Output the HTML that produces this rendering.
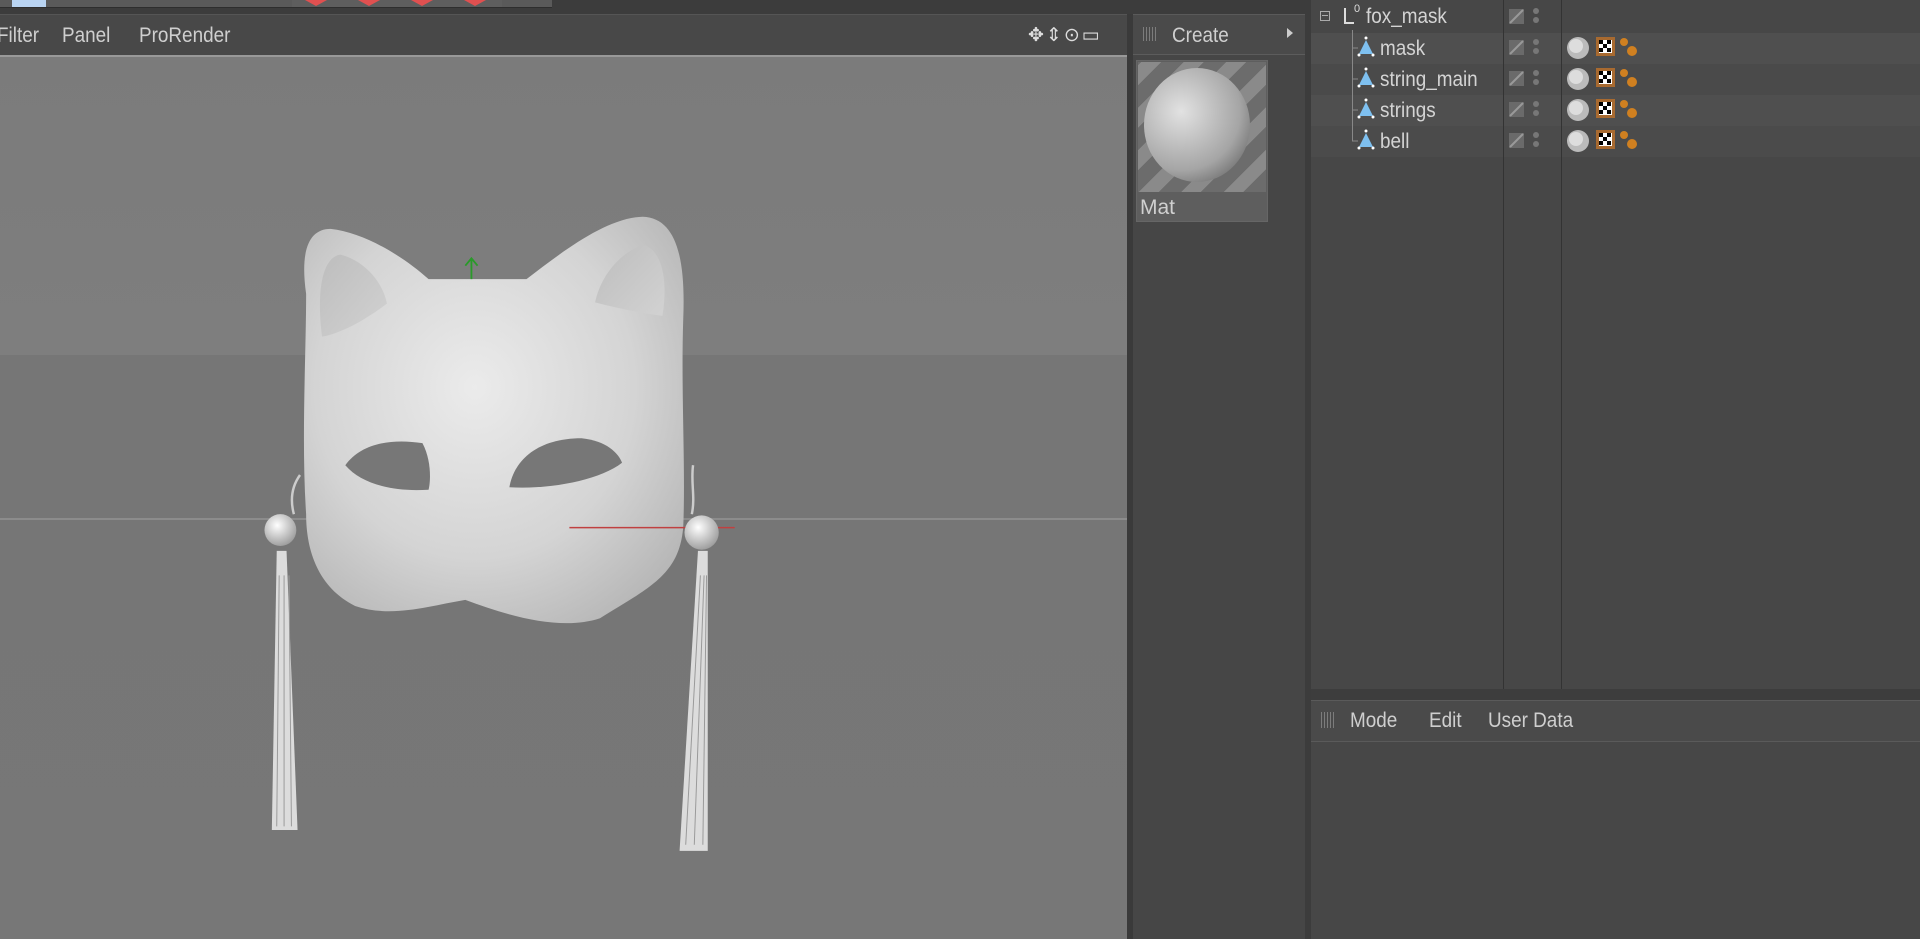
<!DOCTYPE html>
<html><head><meta charset="utf-8"><style>
*{margin:0;padding:0;box-sizing:border-box}
body{width:1920px;height:939px;overflow:hidden;background:#444;font-family:"Liberation Sans",sans-serif;position:relative;color:#c8c8c8}
.abs{position:absolute}
.menu{font-size:21px;color:#cfcfcf;transform:scaleX(.9);transform-origin:left}
.row{position:absolute;left:1311px;width:609px;height:31px}
.name{position:absolute;left:1380px;font-size:21px;color:#d4d4d4;transform:scaleX(.9);transform-origin:left}
</style></head><body>
<div class="abs" style="left:0;top:0;width:1920px;height:14px;background:#3c3c3c"></div>
<div class="abs" style="left:0;top:0;width:552px;height:8px;background:#5a5a5a;border-bottom:1px solid #2e2e2e"></div>
<div class="abs" style="left:12px;top:0;width:34px;height:7px;background:#b9d4f2"></div>
<div class="abs" style="left:292px;top:0;width:210px;height:7px;background:#5e5e5e"></div>
<div class="abs" style="left:305px;top:0;width:22px;height:6px;background:#e05050;clip-path:polygon(0 0,100% 0,50% 100%)"></div>
<div class="abs" style="left:358px;top:0;width:22px;height:6px;background:#e05050;clip-path:polygon(0 0,100% 0,50% 100%)"></div>
<div class="abs" style="left:411px;top:0;width:22px;height:6px;background:#e05050;clip-path:polygon(0 0,100% 0,50% 100%)"></div>
<div class="abs" style="left:464px;top:0;width:22px;height:6px;background:#e05050;clip-path:polygon(0 0,100% 0,50% 100%)"></div>
<div class="abs" style="left:0;top:14px;width:1127px;height:41px;background:#484848;border-top:1px solid #555"></div>
<div class="abs menu" style="left:-3px;top:24px">Filter</div>
<div class="abs menu" style="left:62px;top:24px">Panel</div>
<div class="abs menu" style="left:139px;top:24px">ProRender</div>
<div class="abs" style="left:1028px;top:24px;font-size:19px;color:#ddd;letter-spacing:2px">✥⇕⊙▭</div>
<div class="abs" style="left:0;top:55px;width:1127px;height:884px;background:linear-gradient(#7b7b7b 0,#7e7e7e 298px,#767676 298px,#777 100%);border-top:2px solid #999"></div>
<div class="abs" style="left:0;top:518px;width:1127px;height:2px;background:#8c8c8c"></div>
<div class="abs" style="left:1127px;top:14px;width:6px;height:925px;background:#3a3a3a"></div>
<svg class="abs" style="left:0;top:0" width="1920" height="939" viewBox="0 0 1568 767" preserveAspectRatio="none">
<defs>
<radialGradient id="g" cx="0.45" cy="0.42" r="0.7"><stop offset="0" stop-color="#ebebeb"/><stop offset=".6" stop-color="#d4d4d4"/><stop offset="1" stop-color="#b4b4b4"/></radialGradient>
<radialGradient id="b" cx=".4" cy=".35" r=".7"><stop offset="0" stop-color="#fff"/><stop offset="1" stop-color="#999"/></radialGradient>
<linearGradient id="e" x1="0" y1="0" x2="1" y2="1"><stop offset="0" stop-color="#bdbdbd"/><stop offset="1" stop-color="#d2d2d2"/></linearGradient>
</defs>
<path d="M250 240C245 205 252 187 270 187C298 190 330 210 350 228L430 228C460 205 495 178 525 177C552 178 560 210 558 260C556 320 560 380 558 430C555 470 530 480 490 505C460 515 420 505 380 490C350 495 320 505 290 495C260 480 250 450 250 420C246 360 250 290 250 240Z" fill="url(#g)"/>
<path d="M263 275C258 235 264 210 278 208C295 212 312 228 316 248C300 260 280 272 263 275Z" fill="url(#e)"/>
<path d="M541 258C546 228 540 203 525 200C505 207 490 227 486 247C505 252 525 256 541 258Z" fill="url(#e)"/>
<path d="M282 380C295 362 320 358 345 362C352 375 352 392 350 400C320 402 295 395 282 380Z" fill="#777"/>
<path d="M416 398C420 375 440 358 475 358C495 360 505 370 508 378C490 392 450 400 416 398Z" fill="#777"/>
<line x1="465" y1="431" x2="600" y2="431" stroke="#c04040" stroke-width="1.2"/>
<line x1="385" y1="228" x2="385" y2="212" stroke="#2a9a2a" stroke-width="1.5"/>
<path d="M380 217L385 211L390 217" fill="none" stroke="#2a9a2a" stroke-width="1.5"/>
<path d="M226 450L222 678L243 678L234 450Z" fill="#dcdcdc"/>
<path d="M228 470L226 675M232 470L232 675M236 470L238 675" stroke="#999" stroke-width=".8"/>
<path d="M570 450L555 695L578 695L578 450Z" fill="#dcdcdc"/>
<path d="M572 470L560 690M575 470L567 690M577 470L574 690" stroke="#999" stroke-width=".8"/>
<path d="M240 420C236 405 240 395 245 388M565 420C568 405 564 395 566 380" stroke="#ccc" stroke-width="2" fill="none"/>
<circle cx="229" cy="433" r="13" fill="url(#b)"/>
<circle cx="573" cy="435" r="14" fill="url(#b)"/>
</svg>
<div class="abs" style="left:1133px;top:14px;width:172px;height:925px;background:#464646"></div>
<div class="abs" style="left:1133px;top:14px;width:172px;height:41px;background:#4a4a4a;border-top:1px solid #5a5a5a;border-bottom:1px solid #5c5c5c"></div>
<div class="abs" style="left:1143px;top:27px;width:14px;height:14px;background:repeating-linear-gradient(90deg,#888 0 1px,transparent 1px 3px);opacity:.8"></div>
<div class="abs menu" style="left:1172px;top:24px">Create</div>
<div class="abs" style="left:1287px;top:28px;width:0;height:0;border-left:6px solid #ccc;border-top:5px solid transparent;border-bottom:5px solid transparent"></div>
<div class="abs" style="left:1136px;top:60px;width:132px;height:162px;background:#5e5e5e;border:1px solid #666"></div>
<div class="abs" style="left:1138px;top:62px;width:128px;height:130px;background:repeating-linear-gradient(-45deg,#6c6c6c 0 16px,#8a8a8a 16px 30px)"></div>
<div class="abs" style="left:1144px;top:68px;width:106px;height:114px;border-radius:50%;background:radial-gradient(circle at 35% 38%,#e2e2e2,#a5a5a5 60%,#4a4a4a 100%)"></div>
<div class="abs" style="left:1140px;top:196px;font-size:21px;color:#d0d0d0">Mat</div>
<div class="abs" style="left:1305px;top:0;width:6px;height:939px;background:#3c3c3c"></div>
<div class="abs" style="left:1311px;top:0;width:609px;height:689px;background:#474747"></div>
<div class="row" style="top:33px;background:#4f4f4f"></div>
<div class="row" style="top:64px;background:#4a4a4a"></div>
<div class="row" style="top:95px;background:#4f4f4f"></div>
<div class="row" style="top:126px;background:#4b4b4b"></div>
<div class="abs" style="left:1503px;top:0;width:1px;height:689px;background:#333"></div>
<div class="abs" style="left:1561px;top:0;width:1px;height:689px;background:#333"></div>
<div class="abs" style="left:1320px;top:11px;width:10px;height:10px;border:1px solid #aaa"></div>
<div class="abs" style="left:1322px;top:15px;width:6px;height:1px;background:#aaa"></div>
<div class="abs" style="left:1344px;top:8px;width:10px;height:16px;border-left:2px solid #ddd;border-bottom:2px solid #ddd"></div>
<div class="abs" style="left:1354px;top:3px;font-size:11px;color:#ddd">0</div>
<div class="abs" style="left:1352px;top:30px;width:1px;height:111px;background:#888"></div>
<div class="abs" style="left:1366px;top:5px;font-size:21px;color:#d4d4d4;transform:scaleX(.9);transform-origin:left">fox_mask</div>
<div class="name" style="top:37px">mask</div>
<div class="name" style="top:68px">string_main</div>
<div class="name" style="top:99px">strings</div>
<div class="name" style="top:130px">bell</div>
<svg class="abs" style="left:1311px;top:0" width="609" height="160">
<g id="r">
<line x1="41" y1="48" x2="47" y2="48" stroke="#888"/>
<path d="M55 40L48 54L62 54Z" fill="#7ec0f0"/><circle cx="55" cy="38" r="1.5" fill="#fff"/><circle cx="48" cy="55" r="1.5" fill="#fff"/><circle cx="62" cy="55" r="1.5" fill="#fff"/>
<rect x="198" y="40" width="15" height="15" fill="#6a6a6a"/><path d="M199 54L212 41" stroke="#999" stroke-width="2"/>
<circle cx="225" cy="42" r="3" fill="#777"/><circle cx="225" cy="51" r="3" fill="#777"/>
<circle cx="267" cy="48" r="11" fill="#bbb"/><circle cx="265" cy="46" r="7" fill="#ddd"/>
<rect x="285" y="37" width="19" height="19" fill="#a86a30"/><rect x="288" y="40" width="13" height="13" fill="#fff"/><rect x="288" y="40" width="4" height="4" fill="#000"/><rect x="296" y="40" width="4" height="4" fill="#000"/><rect x="292" y="44" width="4" height="4" fill="#000"/><rect x="288" y="48" width="4" height="4" fill="#000"/><rect x="296" y="48" width="4" height="4" fill="#000"/>
<circle cx="313" cy="42" r="4" fill="#d08020"/><circle cx="321" cy="51" r="5" fill="#d08020"/>
</g>
<use href="#r" y="31"/><use href="#r" y="62"/><use href="#r" y="93"/>
<rect x="198" y="9" width="15" height="15" fill="#6a6a6a"/><path d="M199 23L212 10" stroke="#999" stroke-width="2"/>
<circle cx="225" cy="11" r="3" fill="#777"/><circle cx="225" cy="20" r="3" fill="#777"/>
</svg>
<div class="abs" style="left:1311px;top:689px;width:609px;height:11px;background:#3d3d3d"></div>
<div class="abs" style="left:1311px;top:700px;width:609px;height:239px;background:#474747"></div>
<div class="abs" style="left:1311px;top:700px;width:609px;height:42px;background:#4a4a4a;border-top:1px solid #5a5a5a;border-bottom:1px solid #5a5a5a"></div>
<div class="abs" style="left:1321px;top:712px;width:13px;height:16px;background:repeating-linear-gradient(90deg,#888 0 1px,transparent 1px 3px);opacity:.8"></div>
<div class="abs menu" style="left:1350px;top:709px">Mode</div>
<div class="abs menu" style="left:1429px;top:709px">Edit</div>
<div class="abs menu" style="left:1488px;top:709px">User Data</div>
</body></html>
